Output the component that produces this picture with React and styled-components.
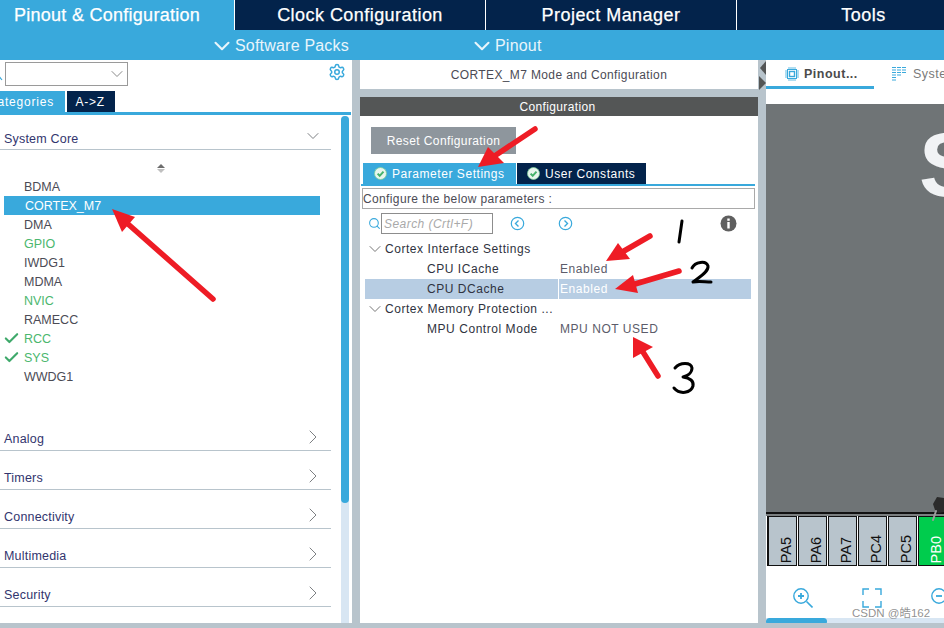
import React from 'react';
import styled, { createGlobalStyle } from 'styled-components';
import { ChevronDown, ChevronRight, Check, Settings, Search } from 'lucide-react';

const Global = createGlobalStyle`
  html, body { margin: 0; padding: 0; }
  body { font-family: "Liberation Sans", Arial, sans-serif; background: #b8c4cc; }
  * { box-sizing: border-box; }
`;
const Page = styled.div`
  position: relative; width: 944px; height: 628px; overflow: hidden;
  display: flex; flex-direction: column; background: #b8c4cc;
`;
const TopTabs = styled.div`display: flex; height: 30px; background: #03234b; gap: 1px;`;
const TopTab = styled.div`
  width: ${p => p.$w}px; display: flex; align-items: center; justify-content: center;
  font-size: 18px; letter-spacing: ${p => p.$active ? .27 : .45}px; color: #fff; flex: none;
  -webkit-text-stroke: .25px #fff;
  padding: 0 ${p => p.$pr || 0}px 0 ${p => p.$pl || 0}px;
  background: ${p => p.$active ? '#39a9dc' : '#03234b'};
  box-shadow: 1px 0 0 #fff;
`;
const SubBar = styled.div`
  height: 30px; background: #39a9dc; color: #e9f5fb; font-size: 16px; letter-spacing: .2px;
  display: flex; align-items: center; padding: 1px 0 0 209px;
`;
const SubItem = styled.div`
  display: flex; align-items: center; width: ${p => p.$w}px;
`;
const Main = styled.div`flex: 1; display: flex; min-height: 0;`;
const Left = styled.div`
  width: 352px; height: 563px; background: #fff; overflow: hidden; flex: none;
  display: flex; flex-direction: column;
`;
const FilterRow = styled.div`
  height: 31px; display: flex; align-items: flex-start; padding: 2px 6px 0 0; flex: none;
`;
const Caret = styled.svg`flex: none; margin-top: 14px;`;
const SelectBox = styled.div`
  width: 123px; height: 24px; border: 1px solid #9a9a9a; background: #fff;
  display: flex; align-items: center; justify-content: flex-end; color: #8a8a8a;
`;
const Gear = styled.div`margin: 1px 0 0 auto; display: flex; color: #39a9dc;`;
const SmallTabs = styled.div`
  display: flex; height: 24px; gap: 2px; border-bottom: 3px solid #39a9dc; margin-right: 1px;
  margin-left: -20px; flex: none;
`;
const SmallTab = styled.div`
  height: 21px; width: ${p => p.$w}px; display: flex; align-items: center; justify-content: flex-end;
  padding-right: ${p => p.$pr}px; font-size: 12px; letter-spacing: .8px; color: #fff; flex: none;
  background: ${p => p.$active ? '#39a9dc' : '#03234b'};
`;
const LeftBody = styled.div`flex: 1; display: flex; min-height: 0;`;
const Tree = styled.div`width: 341px; flex: none; display: flex; flex-direction: column;`;
const Track = styled.div`
  width: 8px; margin-top: 1px; height: 508px; background: #d8e6f3; border-radius: 4px 4px 0 0; flex: none;
`;
const Thumb = styled.div`height: 387px; background: #39a9dc; border-radius: 4px;`;
const Section = styled.div`
  width: 331px; height: ${p => p.$h || 39}px; border-bottom: 1px solid #b8c4cc; flex: none;
  display: flex; align-items: flex-end; justify-content: space-between;
  padding: 0 ${p => p.$pr}px ${p => p.$pb}px 4px; font-size: 12.5px; letter-spacing: .2px; color: #32356e;
`;
const Chevron = styled.span`display: flex; color: #7d8083; margin-bottom: ${p => p.$mb}px;`;
const Sorter = styled.div`
  width: 322px; height: 27px; display: flex; flex-direction: column; align-items: center; justify-content: center; gap: 1px;
  padding-top: 9px;
`;
const SortUp = styled.div`
  width: 0; height: 0; border-left: 4px solid transparent; border-right: 4px solid transparent;
  border-bottom: 4px solid #6d6d6d;
`;
const SortDown = styled.div`
  width: 0; height: 0; border-left: 4px solid transparent; border-right: 4px solid transparent;
  border-top: 4px solid #c0c0c0;
`;
const List = styled.div`display: flex; flex-direction: column; height: 247px; flex: none;`;
const Item = styled.div`
  width: 316px; margin-left: 4px; height: 19px; flex: none; display: flex; align-items: center;
  font-size: 12.5px; padding-left: ${p => p.$sel ? 21 : 20}px; position: relative;
  color: ${p => p.$sel ? '#fff' : p.$green ? '#4bb76e' : '#4b4b55'};
  background: ${p => p.$sel ? '#39a9dc' : 'transparent'};
`;
const Tick = styled.span`position: absolute; left: -1px; top: 1px; display: flex; color: #3fa96b;`;

const Gutter = styled.div`width: 8px; flex: none;`;
const Center = styled.div`
  width: 398px; flex: none; display: flex; flex-direction: column; height: 563px;
`;
const CenterHead = styled.div`
  height: 29px; background: #fff; flex: none; display: flex; align-items: center; justify-content: center;
  font-size: 12px; letter-spacing: .37px; color: #4b4b55;
`;
const CfgBar = styled.div`
  margin-top: 8px; height: 19px; background: #545656; color: #fff; font-size: 12px; letter-spacing: .35px; flex: none;
  display: flex; align-items: center; justify-content: center; padding-right: 3px;
`;
const CfgBody = styled.div`flex: 1; background: #fff; padding: 11px 3px 0 1px; display: flex; flex-direction: column;`;
const ResetBtn = styled.div`
  margin-left: 10px; width: 145px; height: 27px; background: #8e969d; color: #fff; font-size: 12px; letter-spacing: .4px;
  display: flex; align-items: center; justify-content: center; flex: none;
`;
const CfgTabs = styled.div`
  margin-top: 9px; height: 23px; border-bottom: 2px solid #39a9dc; display: flex; padding-left: 2px; gap: 1px; flex: none;
`;
const CfgTab = styled.div`
  width: ${p => p.$w}px; height: 21px; display: flex; align-items: center; gap: 5px; padding-left: ${p => p.$pl}px;
  font-size: 12px; letter-spacing: .55px; color: #fff; flex: none;
  background: ${p => p.$active ? '#39a9dc' : '#03234b'};
`;
const Circle = styled.svg`flex: none;`;
const HintBox = styled.div`
  margin: 2px 0 0 1px; width: 393px; height: 21px; border: 1px solid #a9a9a9; flex: none;
  display: flex; align-items: center; font-size: 12px; letter-spacing: .37px; color: #4b4b55;
`;
const SearchRow = styled.div`
  margin-top: 4px; height: 21px; display: flex; align-items: center; flex: none; padding-left: 7px; color: #39a9dc;
`;
const SearchInput = styled.div`
  width: 112px; height: 21px; border: 1px solid #8d8d8d; display: flex; align-items: center;
  font-size: 12px; font-style: italic; color: #a9a9a9; padding-left: 2px; letter-spacing: .45px;
`;
const NavBtn = styled.span`display: flex; margin-left: ${p => p.$ml}px;`;
const Rows = styled.div`margin-top: 5px; display: flex; flex-direction: column; flex: none;`;
const Row = styled.div`
  height: 20px; display: flex; align-items: center; margin: 0 4px 0 4px; font-size: 12px; letter-spacing: .55px;
  background: ${p => p.$sel ? '#b7cde3' : 'transparent'}; flex: none;
`;
const GroupLabel = styled.div`display: flex; align-items: center; color: #2f3340;`;
const RowName = styled.div`width: 193px; padding-left: 62px; color: #2f3340;`;
const RowValue = styled.div`
  flex: 1; height: 100%; display: flex; align-items: center; padding-left: 1px;
  color: ${p => p.$sel ? '#fff' : '#5c5c6a'};
  border-left: ${p => p.$sel ? '1px solid #fff' : '1px solid transparent'};
`;

const Right = styled.div`
  flex: 1; display: flex; flex-direction: column; position: relative; overflow: hidden; height: 563px; min-width: 0;
`;
const RightTabs = styled.div`height: 29px; display: flex; background: #fff; flex: none;`;
const RightTab = styled.div`
  width: ${p => p.$w}px; flex: none; display: flex; align-items: center; gap: ${p => p.$gap}px; padding: 2px 0 0 ${p => p.$pl}px;
  font-size: 12.5px; letter-spacing: .5px; white-space: nowrap; overflow: hidden;
  color: ${p => p.$active ? '#4b4b4b' : '#7a7a7a'}; font-weight: ${p => p.$active ? 700 : 400};
  border-bottom: 3px solid ${p => p.$active ? '#39a9dc' : 'transparent'};
`;
const TabIcon = styled.svg`flex: none;`;
const RightSpacer = styled.div`height: 15px; background: #fff; flex: none;`;
const Canvas = styled.div`
  height: 408px; background: #6f7476; position: relative; overflow: hidden; flex: none;
`;
const BigS = styled.div`
  position: absolute; left: 153px; top: 16px; color: #f1f3f5; font-size: 90px; font-weight: 700; line-height: 1;
`;
const PinFrame = styled.div`
  height: 54px; border-top: 2px solid #111; padding: 2px 0 0 1px; flex: none; display: flex; overflow: hidden;
  gap: 1px; background: linear-gradient(#7b7f80 0 2px, #fff 2px);
`;
const Sliver = styled.div`width: 1px; height: 50px; background: #111; margin-right: -1px; flex: none;`;
const Pin = styled.div`
  width: 29px; height: 50px; flex: none; border: 1px solid #111; display: flex; align-items: flex-end; justify-content: center;
  padding-left: 6px; background: ${p => p.$green ? '#00cc4d' : '#b8c4cc'};
`;
const PinLabel = styled.span`
  writing-mode: vertical-rl; transform: rotate(180deg); font-size: 14.5px; padding: 2px 0;
  color: ${p => p.$green ? '#fff' : '#111'};
`;
const PushPin = styled.svg`position: absolute; left: 159px; top: 435px;`;
const Tools = styled.div`
  height: 52px; background: #fff; display: flex; align-items: flex-start; padding: 22px 0 0 27px; gap: 49px; flex: none;
`;
const ToolIcon = styled.svg`flex: none;`;
const HBar = styled.div`height: 7px; background: #d8e6f3; flex: none;`;
const HThumb = styled.div`width: 61px; height: 7px; background: #39a9dc; border-radius: 4px;`;
const Divider = styled.div`width: 8px; height: 563px; flex: none; position: relative; background: #b8c4cc;`;
const HandleL = styled.div`
  position: absolute; left: 2px; top: 1px; width: 0; height: 0;
  border-top: 7px solid transparent; border-bottom: 7px solid transparent; border-right: 6px solid #545656;
`;
const HandleR = styled.div`
  position: absolute; left: 1px; top: 16px; width: 0; height: 0;
  border-top: 7px solid transparent; border-bottom: 7px solid transparent; border-left: 7px solid #545656;
`;
const Mark = styled.svg`position: absolute; left: 0; top: 0; pointer-events: none;`;
const Watermark = styled.div`
  position: absolute; left: 852px; top: 604px; font-size: 11.5px; color: rgba(125,125,125,.85);
  font-family: "Liberation Sans", "Noto Sans CJK SC", sans-serif; white-space: nowrap;
`;

const OkIcon = () => (
  <Circle width="13" height="13" viewBox="0 0 13 13">
    <circle cx="6.5" cy="6.5" r="6" fill="#e8f6ee" stroke="#7ccf9a" strokeWidth=".8" />
    <path d="M3.6 6.6 5.7 8.8 9.5 4.6" fill="none" stroke="#45b36b" strokeWidth="2" />
  </Circle>
);
const NavIcon = ({ d }) => (
  <svg width="15" height="15" viewBox="0 0 15 15" fill="none" stroke="#39a9dc" strokeWidth="1.2">
    <circle cx="7.5" cy="7.5" r="6.2" />
    <path d={d} strokeWidth="1.4" />
  </svg>
);
const ChipIcon = () => (
  <TabIcon width="14" height="14" viewBox="0 0 14 14" fill="none" stroke="#39a9dc">
    <rect x="2.5" y="2.5" width="9" height="9" />
    <rect x="4.5" y="4.5" width="5" height="5" strokeWidth="1.4" />
    <path d="M4 0v2M6 0v2M8 0v2M10 0v2M4 12v2M6 12v2M8 12v2M10 12v2M0 4h2M0 6h2M0 8h2M0 10h2M12 4h2M12 6h2M12 8h2M12 10h2" strokeWidth=".8" />
  </TabIcon>
);
const SysIcon = () => (
  <TabIcon width="14" height="14" viewBox="0 0 14 14" stroke="#39a9dc" fill="none" strokeWidth="1">
    <path d="M0 .5h4M5 .5h4M10 .5h4M0 3h4M5 3h4M10 3h4M0 5.5h4M5 5.5h4M10 5.5h4M0 8h4M5 8h4M0 10.5h4M0 13h4" />
  </TabIcon>
);

const arrows = [
  { tail: [213, 299], head: [[122, 232], [112, 209], [135, 217]], neck: [128, 224] },
  { tail: [535, 129], head: [[488, 147], [478, 167], [504, 163]], neck: [496, 155] },
  { tail: [650, 236], head: [[618, 243], [606, 261], [630, 259]], neck: [624, 251] },
  { tail: [679, 271], head: [[633, 275], [615, 289], [638, 293]], neck: [635, 284] },
  { tail: [658, 376], head: [[633, 358], [633, 337], [653, 347]], neck: [643, 352] },
];

const Annotations = () => (
  <Mark width="944" height="628" viewBox="0 0 944 628">
    {arrows.map((a, i) => (
      <g key={i}>
        <line x1={a.tail[0]} y1={a.tail[1]} x2={a.neck[0]} y2={a.neck[1]} stroke="#ee1c25" strokeWidth="5.5" strokeLinecap="round" />
        <polygon points={a.head.map(p => p.join(',')).join(' ')} fill="#ee1c25" />
      </g>
    ))}
    <g fill="none" stroke="#000" strokeWidth="3" strokeLinecap="round" strokeLinejoin="round">
      <path d="M682 221 679 242" />
      <path d="M692 268C695 262 706 260 708 266C709 272 698 278 693 282C699 281 705 282 711 282" />
      <path d="M675 368C680 362 691 362 692 368C692 373 687 376 683 377C690 378 694 381 693 386C691 393 680 395 674 388" />
    </g>
  </Mark>
);

const categories = ['Analog', 'Timers', 'Connectivity', 'Multimedia', 'Security'];
const items = [
  ['BDMA'], ['CORTEX_M7', 'sel'], ['DMA'], ['GPIO', 'green'], ['IWDG1'], ['MDMA'], ['NVIC', 'green'],
  ['RAMECC'], ['RCC', 'green', true], ['SYS', 'green', true], ['WWDG1'],
];
const pins = ['PA5', 'PA6', 'PA7', 'PC4', 'PC5', 'PB0'];

export default function App() {
  return (
    <Page>
      <Global />
      <TopTabs>
        <TopTab $w={234} $pr={20} $active>Pinout &amp; Configuration</TopTab>
        <TopTab $w={250}>Clock Configuration</TopTab>
        <TopTab $w={250}>Project Manager</TopTab>
        <TopTab $w={207} $pl={46}>Tools</TopTab>
      </TopTabs>
      <SubBar>
        <SubItem $w={260}><ChevronDown size={26} strokeWidth={1.9} />Software Packs</SubItem>
        <SubItem $w={120}><ChevronDown size={26} strokeWidth={1.9} />Pinout</SubItem>
      </SubBar>
      <Main>
        <Left>
          <FilterRow>
            <Caret width="5" height="5" viewBox="0 0 5 5"><path d="M-2 4 0 1.5 2 4" fill="none" stroke="#39a9dc" strokeWidth="1.2" /></Caret>
            <SelectBox><ChevronDown size={20} strokeWidth={1.2} /></SelectBox>
            <Gear><Settings size={18} strokeWidth={2} /></Gear>
          </FilterRow>
          <SmallTabs>
            <SmallTab $w={85} $pr={11} $active>Categories</SmallTab>
            <SmallTab $w={48} $pr={10}>A-&gt;Z</SmallTab>
          </SmallTabs>
          <LeftBody>
            <Tree>
              <Section $h={35} $pr={8} $pb={3}>System Core<Chevron $mb={0}><ChevronDown size={20} strokeWidth={1.2} /></Chevron></Section>
              <Sorter><SortUp /><SortDown /></Sorter>
              <List>
                {items.map(([name, kind, tick]) => (
                  <Item key={name} $sel={kind === 'sel'} $green={kind === 'green'}>
                    {tick && <Tick><Check size={17} strokeWidth={3} /></Tick>}
                    {name}
                  </Item>
                ))}
              </List>
              {categories.map((c, i) => (
                <Section key={c} $h={i === 0 ? 27 : 39} $pr={6} $pb={4}>
                  {c}<Chevron $mb={-3}><ChevronRight size={24} strokeWidth={1} /></Chevron>
                </Section>
              ))}
            </Tree>
            <Track><Thumb /></Track>
          </LeftBody>
        </Left>
        <Gutter />
        <Center>
          <CenterHead>CORTEX_M7 Mode and Configuration</CenterHead>
          <CfgBar>Configuration</CfgBar>
          <CfgBody>
            <ResetBtn>Reset Configuration</ResetBtn>
            <CfgTabs>
              <CfgTab $w={153} $pl={11} $active><OkIcon />Parameter Settings</CfgTab>
              <CfgTab $w={129} $pl={10}><OkIcon />User Constants</CfgTab>
            </CfgTabs>
            <HintBox>Configure the below parameters :</HintBox>
            <SearchRow>
              <Search size={13} strokeWidth={2} />
              <SearchInput>Search (Crtl+F)</SearchInput>
              <NavBtn $ml={17}><NavIcon d="M8.5 4.5 5.5 7.5 8.5 10.5" /></NavBtn>
              <NavBtn $ml={33}><NavIcon d="M6.5 4.5 9.5 7.5 6.5 10.5" /></NavBtn>
              <NavBtn $ml={147}>
                <svg width="17" height="17" viewBox="0 0 17 17">
                  <circle cx="8.5" cy="8.5" r="8" fill="#5f5f5f" />
                  <rect x="7.3" y="7" width="2.4" height="6.5" fill="#fff" />
                  <rect x="7.3" y="3.5" width="2.4" height="2.3" fill="#fff" />
                </svg>
              </NavBtn>
            </SearchRow>
            <Rows>
              <Row><GroupLabel><ChevronDown size={20} strokeWidth={1.2} color="#777" />Cortex Interface Settings</GroupLabel></Row>
              <Row><RowName>CPU ICache</RowName><RowValue>Enabled</RowValue></Row>
              <Row $sel><RowName>CPU DCache</RowName><RowValue $sel>Enabled</RowValue></Row>
              <Row><GroupLabel><ChevronDown size={20} strokeWidth={1.2} color="#777" />Cortex Memory Protection ...</GroupLabel></Row>
              <Row><RowName>MPU Control Mode</RowName><RowValue>MPU NOT USED</RowValue></Row>
            </Rows>
          </CfgBody>
        </Center>
        <Divider><HandleL /><HandleR /></Divider>
        <Right>
          <RightTabs>
            <RightTab $w={108} $pl={19} $gap={5} $active><ChipIcon />Pinout...</RightTab>
            <RightTab $w={70} $pl={18} $gap={7}><SysIcon />System view</RightTab>
          </RightTabs>
          <RightSpacer />
          <Canvas><BigS>S</BigS></Canvas>
          <PinFrame>
            <Sliver />
            {pins.map(p => {
              const g = p === 'PB0';
              return <Pin key={p} $green={g}><PinLabel $green={g}>{p}</PinLabel></Pin>;
            })}
          </PinFrame>
          <Tools>
            <ToolIcon width="20" height="20" viewBox="0 0 20 20" fill="none" stroke="#39a9dc" strokeWidth="1.4">
              <circle cx="8" cy="8" r="7.2" /><path d="M8 5v6M5 8h6" strokeWidth="1.8" /><path d="M13.5 13.5l6 6" strokeWidth="1.6" />
            </ToolIcon>
            <ToolIcon width="20" height="20" viewBox="0 0 20 20" fill="none" stroke="#39a9dc" strokeWidth="1.4">
              <path d="M1 7V1h6M13 1h6v6M19 13v6h-6M7 19H1v-6" />
            </ToolIcon>
            <ToolIcon width="20" height="20" viewBox="0 0 20 20" fill="none" stroke="#39a9dc" strokeWidth="1.4">
              <circle cx="8" cy="8" r="7.2" /><path d="M5 8h6" strokeWidth="1.8" />
            </ToolIcon>
          </Tools>
          <HBar><HThumb /></HBar>
          <PushPin width="19" height="30" viewBox="0 0 19 30">
            <path d="M8 9 12 2 19 3 19 17 13 18 10 15Z" fill="#2b2b2b" />
            <path d="M11 16 8 25" stroke="#9a9a9a" strokeWidth="2" strokeLinecap="round" />
          </PushPin>
        </Right>
      </Main>
      <Annotations />
      <Watermark>CSDN @皓162</Watermark>
    </Page>
  );
}
